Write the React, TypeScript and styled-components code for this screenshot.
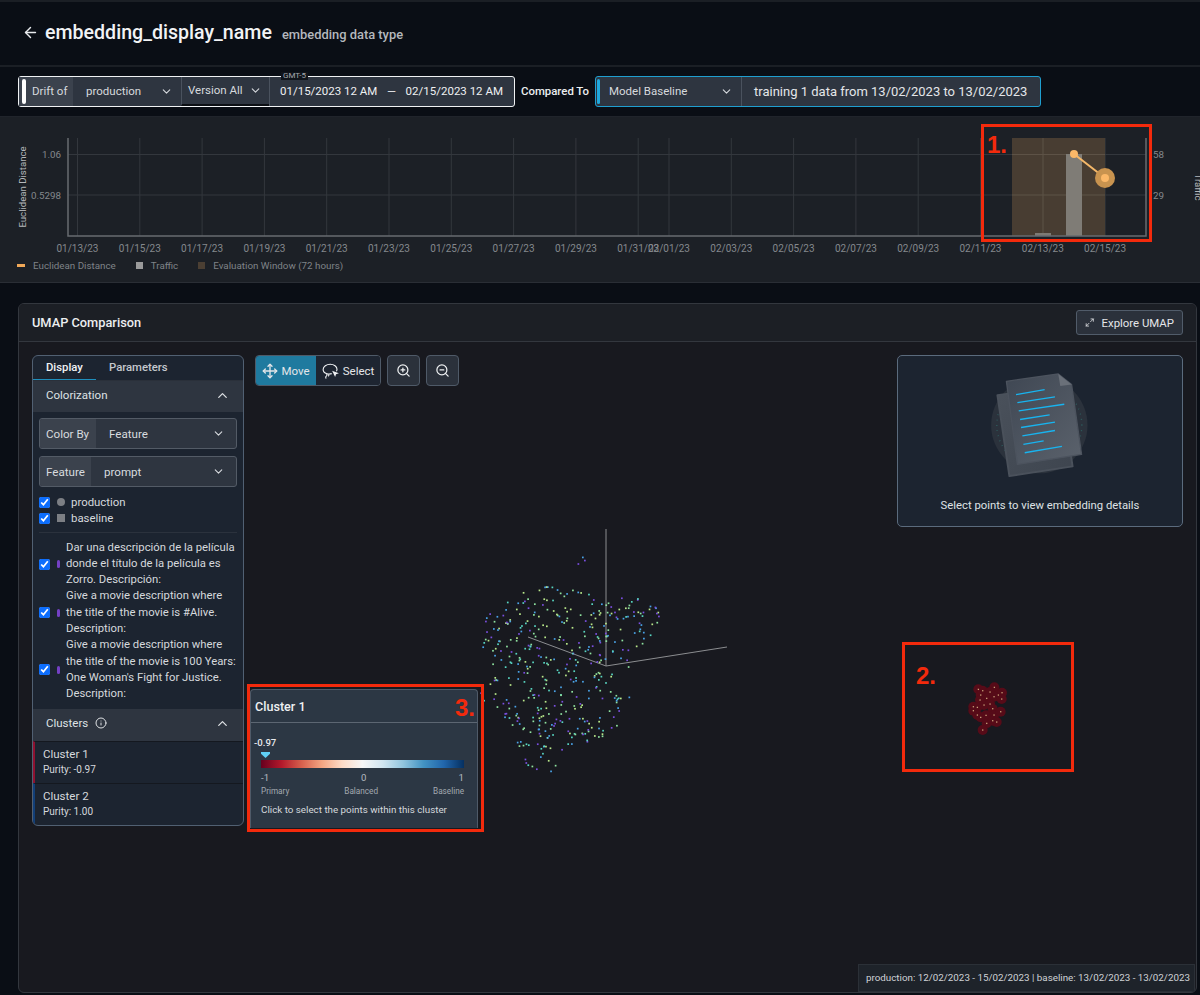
import styled, { createGlobalStyle } from "styled-components";
import {
  ArrowLeft,
  ChevronDown,
  ChevronUp,
  Info,
  Maximize2,
  Move,
  ZoomIn,
  ZoomOut,
} from "lucide-react";

const GlobalStyle = createGlobalStyle`
  html, body {
    margin: 0;
    background: #0a0e15;
    overflow: hidden;
  }
  * {
    box-sizing: border-box;
  }
`;

const Page = styled.div`
  position: relative;
  width: 1200px;
  height: 995px;
  overflow: hidden;
  background: #0a0e15;
  color: #e8eaed;
  font-family: Roboto, "Liberation Sans", sans-serif;
`;

const Header = styled.header`
  height: 67px;
  display: flex;
  align-items: center;
  gap: 10px;
  padding: 0 0 2px 22px;
  border-top: 2px solid #1b1f25;
  border-bottom: 2px solid #1b1f25;
`;

const BackIcon = styled(ArrowLeft)`
  margin-right: -4px;
  color: #e8eaed;
`;

const Title = styled.h1`
  margin: 0;
  font-size: 19.6px;
  font-weight: 500;
  color: #f2f3f5;
`;

const SubTitle = styled.span`
  font-size: 12.9px;
  font-weight: 500;
  color: #b4b8bd;
  margin-top: 3px;
`;

const Toolbar = styled.div`
  height: 50px;
  display: flex;
  align-items: center;
  padding: 0 0 1px 18px;
  border-bottom: 1px solid #20242b;
`;

const FilterGroup = styled.div<{ $accent: string; $width: number }>`
  display: flex;
  align-items: stretch;
  width: ${(p) => p.$width}px;
  height: 31px;
  border: 1px solid ${(p) => p.$accent};
  border-radius: 3px;
  background: #2e3540;
`;

const GroupBar = styled.span<{ $color: string; $width: number }>`
  flex: none;
  align-self: stretch;
  width: ${(p) => p.$width}px;
  margin: 2px 0;
  border-radius: 2px;
  background: ${(p) => p.$color};
`;

const Segment = styled.div<{ $width: number; $divider?: boolean }>`
  position: relative;
  display: flex;
  align-items: center;
  justify-content: space-between;
  flex: none;
  width: ${(p) => p.$width}px;
  padding: 0 8px 0 13px;
  font-size: 11.5px;
  color: #d6d9dd;
  white-space: nowrap;
  border-left: ${(p) => (p.$divider ? "1px solid #4a525e" : "none")};
`;

const DriftLabel = styled(Segment)`
  justify-content: flex-start;
  gap: 6px;
  padding: 0 0 0 3px;
  background: #3b424d;
`;

const VersionSegment = styled(Segment)`
  padding: 0 7px 0 6px;
  border-bottom: 2px solid #0c0f14;
`;

const DateSegment = styled(Segment)`
  padding: 0 11px 0 10px;
`;

const BaselineLead = styled.div`
  display: flex;
  align-items: stretch;
  flex: none;
  padding-left: 1px;
`;

const BaselineSelect = styled(Segment)`
  padding: 0 8px 0 9px;
`;

const BaselineRange = styled(Segment)`
  padding: 0 0 0 12px;
`;

const GmtBadge = styled.span`
  position: absolute;
  left: 11px;
  top: -5px;
  padding: 0 2px;
  font-size: 8px;
  line-height: 8px;
  color: #a5a9ae;
  background: #10141b;
`;

const DateText = styled.span`
  font-size: 11.5px;
  color: #eef0f2;
`;

const BaselineText = styled.span`
  font-size: 13px;
  color: #e4e6e9;
`;

const ComparedLabel = styled.span`
  margin: 0 6px;
  font-size: 11.4px;
  font-weight: 500;
  color: #eceef0;
  white-space: nowrap;
`;

const ChartPanel = styled.section`
  height: 166px;
  background: #1c2026;
  border-bottom: 1px solid #2a2e35;
`;

const ChartSvg = styled.svg`
  display: block;
`;

const Legend = styled.div`
  display: flex;
  align-items: center;
  padding: 3px 0 0 17px;
  font-size: 9.8px;
  color: #7f8388;
`;

const LegendItem = styled.span`
  display: flex;
  align-items: center;
  gap: 8px;
  margin-right: 20px;
`;

const LegendSwatch = styled.i<{ $color: string; $thin?: boolean }>`
  display: block;
  width: ${(p) => (p.$thin ? 8 : 7)}px;
  height: ${(p) => (p.$thin ? 3 : 7)}px;
  background: ${(p) => p.$color};
`;

const Card = styled.section`
  position: relative;
  height: 690px;
  margin: 20px 3px 0 18px;
  border: 1px solid #33373e;
  border-radius: 6px;
  background: #18191f;
  overflow: hidden;
`;

const CardHeader = styled.div`
  height: 38px;
  display: flex;
  align-items: center;
  justify-content: space-between;
  padding: 0 13px;
  background: #1c1f25;
  border-bottom: 1px solid #33373e;
`;

const CardTitle = styled.h2`
  margin: 0;
  font-size: 12.8px;
  font-weight: 500;
  color: #eceef0;
`;

const ExploreButton = styled.button`
  display: flex;
  align-items: center;
  gap: 7px;
  width: 107px;
  height: 25px;
  padding: 0 8px;
  border: 1px solid #515c6a;
  border-radius: 3px;
  background: #2b313b;
  color: #e4e6e9;
  font: 400 11.4px Roboto, sans-serif;
  white-space: nowrap;
`;

const CardBody = styled.div`
  position: relative;
  display: flex;
  align-items: flex-start;
  gap: 11px;
  height: 650px;
  padding: 13px 13px 0;
`;

const ScatterCanvas = styled.svg`
  position: absolute;
  left: 0;
  top: 0;
`;

const SidePanel = styled.aside`
  position: relative;
  width: 212px;
  height: 471px;
  flex: none;
  border: 1px solid #516072;
  border-radius: 6px;
  background: #1c2430;
  overflow: hidden;
`;

const Tabs = styled.div`
  display: flex;
  height: 25px;
  border-bottom: 1px solid #2a303a;
`;

const Tab = styled.div<{ $active?: boolean }>`
  width: ${(p) => (p.$active ? 63 : 86)}px;
  padding: 5px 0 0 13px;
  font-size: 11.3px;
  font-weight: 500;
  color: ${(p) => (p.$active ? "#f0f2f4" : "#c4c8cd")};
  border-bottom: 1px solid ${(p) => (p.$active ? "#1f8fbd" : "transparent")};
`;

const SectionHeader = styled.div<{ $height: number; $top?: number }>`
  display: flex;
  align-items: center;
  justify-content: space-between;
  height: ${(p) => p.$height}px;
  margin-top: ${(p) => p.$top ?? 0}px;
  padding: 0 13px 3px;
  font-size: 11.5px;
  color: #dfe2e5;
  background: #2e3540;
`;

const SectionLabel = styled.span`
  display: flex;
  align-items: center;
  gap: 7px;
`;

const SectionBody = styled.div`
  display: flex;
  flex-direction: column;
  padding: 6px 6px 0;
`;

const SelectRow = styled.div`
  display: flex;
  flex: none;
  height: 31px;
  margin-bottom: 7px;
  border: 1px solid #535b66;
  border-radius: 3px;
  background: #2e3540;
  font-size: 11.6px;
  color: #d8dbdf;
  overflow: hidden;
`;

const SelectLabel = styled.span<{ $width: number }>`
  display: flex;
  align-items: center;
  width: ${(p) => p.$width}px;
  padding-left: 6px;
  background: #3b424d;
`;

const SelectValue = styled.span`
  display: flex;
  flex: 1;
  align-items: center;
  justify-content: space-between;
  padding: 0 11px 0 13px;
`;

const CheckRow = styled.label`
  display: flex;
  align-items: center;
  height: 16.3px;
  font-size: 11.4px;
  color: #d6d9dd;
`;

const CheckBox = styled.input`
  width: 11px;
  height: 11px;
  margin: 0 7px 0 0;
  flex: none;
  accent-color: #0d6efd;
`;

const Marker = styled.i<{ $square?: boolean }>`
  display: block;
  flex: none;
  width: 8px;
  height: 8px;
  margin-right: 6px;
  background: #7c7f84;
  border-radius: ${(p) => (p.$square ? "0" : "50%")};
`;

const PurpleMark = styled.i`
  display: block;
  flex: none;
  width: 3px;
  height: 8px;
  margin-right: 6px;
  background: #7440c4;
  border-radius: 2px;
`;

const Divider = styled.hr`
  width: 100%;
  margin: 5px 0 7px;
  border: 0;
  border-top: 1px solid #2b323d;
`;

const FeatureRow = styled.label`
  display: flex;
  align-items: center;
  font-size: 11.3px;
  line-height: 16.3px;
  color: #d6d9dd;
  white-space: nowrap;
`;

const FeatureText = styled.span`
  display: block;
`;

const ClusterRow = styled.div<{ $color: string }>`
  height: 42px;
  padding: 4px 0 0 8px;
  border-top: 1px solid #14181f;
  border-left: 2px solid ${(p) => p.$color};
  color: #d6d9dd;
`;

const ClusterName = styled.div`
  font-size: 11.5px;
  line-height: 16px;
`;

const ClusterPurity = styled.div`
  font-size: 10px;
  line-height: 14px;
  margin-top: 1px;
`;

const ToolGroup = styled.div`
  position: relative;
  display: flex;
  height: 31px;
  width: 126px;
  border: 1px solid #4f5a68;
  border-radius: 4px;
  overflow: hidden;
  flex: none;
`;

const ToolMode = styled.div<{ $active?: boolean; $width: number }>`
  display: flex;
  align-items: center;
  justify-content: center;
  gap: 3px;
  width: ${(p) => p.$width}px;
  font-size: 11.5px;
  color: #e4e6e9;
  background: ${(p) => (p.$active ? "#1f7a9f" : "#1e2531")};
`;

const IconButton = styled.button`
  position: relative;
  display: flex;
  align-items: center;
  justify-content: center;
  flex: none;
  width: 33px;
  height: 31px;
  margin-left: -5px;
  padding: 0;
  border: 1px solid #4f5a68;
  border-radius: 4px;
  background: #2b313b;
  color: #eef0f2;
`;

const DetailsCard = styled.div`
  position: relative;
  display: flex;
  flex-direction: column;
  align-items: center;
  flex: none;
  width: 286px;
  height: 172px;
  margin-left: auto;
  padding-top: 12px;
  border: 1px solid #5b6b7d;
  border-radius: 5px;
  background: #1c2430;
`;

const DetailsText = styled.p`
  margin: 18px 0 0;
  font-size: 11.3px;
  color: #dfe2e5;
`;

const ClusterTooltip = styled.div`
  position: absolute;
  left: 231px;
  top: 347px;
  width: 228px;
  height: 139px;
  border: 1px solid #4f5a68;
  border-bottom: 0;
  border-radius: 4px 4px 0 0;
  background: #2c3744;
`;

const TooltipTitle = styled.div`
  height: 33px;
  padding: 9px 0 0 4px;
  font-size: 12.6px;
  font-weight: 500;
  color: #eef0f2;
  border-bottom: 1px solid #5c6672;
`;

const TooltipBody = styled.div`
  position: relative;
  padding: 14px 13px 0 10px;
`;

const ScoreValue = styled.div`
  margin-left: -7px;
  font-size: 9.6px;
  font-weight: 500;
  line-height: 12px;
  color: #e8eaed;
`;

const ScoreMarker = styled.i`
  display: block;
  width: 9px;
  height: 6px;
  margin: 3px 0 2px 0;
  background: #5fd0f5;
  clip-path: polygon(0 0, 100% 0, 100% 30%, 50% 100%, 0 30%);
`;

const GradientBar = styled.div`
  height: 8px;
  background: linear-gradient(
    90deg,
    #67001f,
    #b2182b,
    #d6604d,
    #f4a582,
    #fddbc7,
    #f7f7f7,
    #d1e5f0,
    #92c5de,
    #4393c3,
    #2166ac,
    #053061
  );
`;

const ScaleRow = styled.div<{ $muted?: boolean }>`
  display: flex;
  justify-content: space-between;
  margin-top: ${(p) => (p.$muted ? 1 : 4)}px;
  font-size: ${(p) => (p.$muted ? 8.2 : 9.6)}px;
  line-height: 12px;
  color: ${(p) => (p.$muted ? "#a3a9b0" : "#b5bac0")};
`;

const TooltipHint = styled.div`
  margin-top: 7px;
  font-size: 9.8px;
  color: #d6d9dd;
  white-space: nowrap;
`;

const RangeCaption = styled.div`
  position: absolute;
  right: 1px;
  bottom: 0;
  width: 337px;
  height: 28px;
  padding: 7px 0 0 7px;
  font-size: 9.8px;
  color: #cfd2d6;
  background: #1e232a;
  border: 1px solid #2b3037;
  white-space: nowrap;
`;

const Annotation = styled.div<{ $x: number; $y: number; $w: number; $h: number }>`
  position: absolute;
  left: ${(p) => p.$x}px;
  top: ${(p) => p.$y}px;
  width: ${(p) => p.$w}px;
  height: ${(p) => p.$h}px;
  border: 3px solid #f32a0c;
`;

const AnnotationLabel = styled.span<{ $x: number; $y: number }>`
  position: absolute;
  left: ${(p) => p.$x}px;
  top: ${(p) => p.$y}px;
  font: 700 24px/24px "Liberation Sans", sans-serif;
  color: #f32a0c;
`;

const chartTicks: [string, number][] = [
  ...[
    "01/13/23",
    "01/15/23",
    "01/17/23",
    "01/19/23",
    "01/21/23",
    "01/23/23",
    "01/25/23",
    "01/27/23",
    "01/29/23",
    "01/31/23",
  ].map((label, i): [string, number] => [label, 77.5 + 62.3 * i]),
  ...[
    "02/01/23",
    "02/03/23",
    "02/05/23",
    "02/07/23",
    "02/09/23",
    "02/11/23",
    "02/13/23",
    "02/15/23",
  ].map((label, i): [string, number] => [label, 669 + 62.3 * i]),
];

const DriftChart = () => (
  <ChartSvg width={1200} height={140} viewBox="0 117 1200 140">
    {chartTicks.map(([label, x]) => (
      <g key={label}>
        <line x1={x} x2={x} y1={138} y2={236} stroke="#33373d" />
        <text x={x} y={252} textAnchor="middle" fontSize={10} fill="#84888d">
          {label}
        </text>
      </g>
    ))}
    <line x1={68} x2={1146} y1={154.5} y2={154.5} stroke="#33373d" />
    <line x1={68} x2={1146} y1={195} y2={195} stroke="#33373d" />
    <rect x={1012} y={138} width={93} height={98} fill="#4b3f33" fillOpacity={0.95} />
    <line x1={1043} x2={1043} y1={138} y2={236} stroke="#5d5246" />
    <line x1={1012} x2={1105} y1={154.5} y2={154.5} stroke="#5d5246" />
    <line x1={1012} x2={1105} y1={195} y2={195} stroke="#5d5246" />
    <rect x={1035} y={233} width={16} height={3} fill="#7d7a74" />
    <rect x={1066} y={154} width={16} height={82} fill="#7f7c76" />
    <path d="M68 138V236H1146V138" fill="none" stroke="#676b70" strokeWidth={1.5} />
    <line x1={1074} y1={154} x2={1105} y2={178} stroke="#f5b869" strokeWidth={2} />
    <circle cx={1105} cy={178} r={10} fill="#c8934f" />
    <circle cx={1105} cy={178} r={4} fill="#fbb868" />
    <circle cx={1074} cy={154} r={4} fill="#fbb868" />
    <g fontSize={9.8} fill="#84888d">
      <text x={61} y={158} textAnchor="end">1.06</text>
      <text x={61} y={199} textAnchor="end">0.5298</text>
      <text x={1153} y={158}>58</text>
      <text x={1153} y={199}>29</text>
    </g>
    <text
      transform="translate(26 187) rotate(-90)"
      textAnchor="middle"
      fontSize={9.6}
      fill="#b5b8bc"
    >
      Euclidean Distance
    </text>
    <text transform="translate(1195 187) rotate(90)" textAnchor="middle" fontSize={9.6} fill="#b5b8bc">
      Traffic
    </text>
  </ChartSvg>
);

// seeded so the cloud stays the same between renders
const makeRandom = (seed: number) => () => {
  seed = (seed + 0x6d2b79f5) | 0;
  let t = Math.imul(seed ^ (seed >>> 15), 1 | seed);
  t = (t + Math.imul(t ^ (t >>> 7), 61 | t)) ^ t;
  return ((t ^ (t >>> 14)) >>> 0) / 4294967296;
};

const blobs = [
  [555, 635, 76, 50],
  [550, 685, 72, 42],
  [560, 722, 58, 22],
  [540, 748, 24, 27],
  [628, 622, 33, 26],
  [608, 682, 22, 44],
  [586, 560, 13, 7],
];
const dotColors = ["#b9e88a", "#58d6c2", "#4aa3e8", "#7a4fe0", "#8fe3a0"];

const cloudPoints = (() => {
  const random = makeRandom(41);
  const points: { x: number; y: number; color: string }[] = [];
  while (points.length < 430) {
    const x = 475 + random() * 190;
    const y = 552 + random() * 224;
    const inside = blobs.some(
      ([cx, cy, rx, ry]) => ((x - cx) / rx) ** 2 + ((y - cy) / ry) ** 2 < 1
    );
    if (inside) {
      points.push({ x, y, color: dotColors[Math.floor(random() * dotColors.length)] });
    }
  }
  return points;
})();

const redCluster = [
  [265, 178], [278, 182], [313, 172], [300, 186], [336, 188], [325, 195], [272, 195],
  [290, 205], [312, 200], [335, 207], [270, 210], [250, 230], [262, 232], [282, 225],
  [300, 222], [308, 236], [250, 242], [262, 255], [288, 256], [312, 255], [332, 245],
  [272, 262], [290, 280], [308, 272], [320, 276], [278, 300],
].map(([x, y]) => [890 + x / 3, 630 + y / 3]);

const Scatter = () => (
  <ScatterCanvas width={1177} height={650} viewBox="19 342 1177 650">
    <g stroke="#8b8d90" strokeWidth={1}>
      <line x1={606} y1={529} x2={606} y2={666} />
      <line x1={606} y1={666} x2={727} y2={647} />
      <line x1={606} y1={666} x2={528} y2={637} />
    </g>
    {cloudPoints.map((p, i) => (
      <rect key={i} x={p.x} y={p.y} width={1.7} height={1.7} fill={p.color} />
    ))}
    {redCluster.map(([x, y], i) => (
      <circle key={i} cx={x} cy={y} r={5} fill="#560b18" />
    ))}
    {redCluster.map(([x, y], i) => (
      <rect key={i} x={x - 0.6} y={y - 0.6} width={1.3} height={1.3} fill="#c9a27a" />
    ))}
  </ScatterCanvas>
);

const LassoIcon = () => (
  <svg width={18} height={18} viewBox="0 0 24 24" fill="none" stroke="#eef0f2" strokeWidth={1.5}>
    <path d="M13 15.500c-2 .6-4.500.7-6.500.1C3.500 14.700 1.500 12.700 1.500 10c0-4 4.500-7 9.500-7s9 3 9 6.500c0 1-.3 2-.9 2.800" />
    <path d="M6 15.500c1.200 1.500.6 3-.5 3.700-.8.5-.8 1.800.2 2.800M9 16c.3 1 .1 2.500-.6 3.300" />
    <path d="M13.500 11.500l9 3.500-3.800 1.200-1.200 3.800z" fill="#eef0f2" stroke="none" />
  </svg>
);

const docLines = [
  [408, 280, 494, 265],
  [412, 304, 525, 287],
  [416, 329, 553, 309],
  [420, 355, 509, 341],
  [423, 379, 525, 363],
  [427, 404, 525, 388],
  [430, 430, 491, 419],
  [434, 455, 546, 436],
];

const DocumentArt = () => (
  <svg width={120} height={113} viewBox="300 200 360 340">
    <defs>
      <linearGradient id="paper" x1="0" y1="0" x2="1" y2="1">
        <stop offset="0" stopColor="#3f4753" />
        <stop offset="1" stopColor="#5b626c" />
      </linearGradient>
      <linearGradient id="paperBack" x1="0" y1="0" x2="1" y2="1">
        <stop offset="0" stopColor="#4a515b" />
        <stop offset="1" stopColor="#3e454f" />
      </linearGradient>
    </defs>
    <circle cx={478} cy={372} r={145} fill="#2b323c" />
    <circle cx={478} cy={372} r={128} fill="none" stroke="#2f6a6a" strokeWidth={4} strokeDasharray="2 14" />
    <path d="M352 282l190-26 36 240-190 29z" fill="url(#paperBack)" stroke="#4a515b" strokeWidth={6} strokeLinejoin="round" />
    <path d="M379 240l156-22 40 32 30 210-193 30z" fill="url(#paper)" stroke="#4c535e" strokeWidth={4} strokeLinejoin="round" />
    <path d="M535 218l40 32-34 4z" fill="#6a7079" />
    {docLines.map(([x1, y1, x2, y2]) => (
      <line key={y1} x1={x1} y1={y1} x2={x2} y2={y2} stroke="#18b4f0" strokeWidth={4} />
    ))}
  </svg>
);

const featureValues = [
  { lines: ["Dar una descripción de la película", "donde el título de la película es", "Zorro. Descripción:"] },
  { lines: ["Give a movie description where", "the title of the movie is #Alive.", "Description:"] },
  {
    lines: [
      "Give a movie description where",
      "the title of the movie is 100 Years:",
      "One Woman's Fight for Justice.",
      "Description:",
    ],
  },
];

const App = () => (
  <Page>
    <GlobalStyle />
    <Header>
      <BackIcon size={17} strokeWidth={2} />
      <Title>embedding_display_name</Title>
      <SubTitle>embedding data type</SubTitle>
    </Header>

    <Toolbar>
      <FilterGroup $accent="#f0f2f4" $width={497}>
        <DriftLabel $width={54}>
          <GroupBar $color="#ffffff" $width={4} />
          Drift of
        </DriftLabel>
        <Segment $width={108}>
          production
          <ChevronDown size={13} />
        </Segment>
        <VersionSegment $width={88} $divider>
          Version All
          <ChevronDown size={13} />
        </VersionSegment>
        <DateSegment $width={245} $divider>
          <GmtBadge>GMT-5</GmtBadge>
          <DateText>01/15/2023 12 AM</DateText>
          <DateText>—</DateText>
          <DateText>02/15/2023 12 AM</DateText>
        </DateSegment>
      </FilterGroup>
      <ComparedLabel>Compared To</ComparedLabel>
      <FilterGroup $accent="#1f9fd0" $width={446}>
        <BaselineLead>
          <GroupBar $color="#1fa8dc" $width={3} />
        </BaselineLead>
        <BaselineSelect $width={141}>
          Model Baseline
          <ChevronDown size={13} />
        </BaselineSelect>
        <BaselineRange $width={298} $divider>
          <BaselineText>training 1 data from 13/02/2023 to 13/02/2023</BaselineText>
        </BaselineRange>
      </FilterGroup>
    </Toolbar>

    <ChartPanel>
      <DriftChart />
      <Legend>
        <LegendItem>
          <LegendSwatch $color="#f0a858" $thin />
          Euclidean Distance
        </LegendItem>
        <LegendItem>
          <LegendSwatch $color="#9a9a9a" />
          Traffic
        </LegendItem>
        <LegendItem>
          <LegendSwatch $color="#4b3f33" />
          Evaluation Window (72 hours)
        </LegendItem>
      </Legend>
    </ChartPanel>

    <Card>
      <CardHeader>
        <CardTitle>UMAP Comparison</CardTitle>
        <ExploreButton>
          <Maximize2 size={13} />
          Explore UMAP
        </ExploreButton>
      </CardHeader>
      <CardBody>
        <Scatter />
        <SidePanel>
          <Tabs>
            <Tab $active>Display</Tab>
            <Tab>Parameters</Tab>
          </Tabs>
          <SectionHeader $height={31}>
            Colorization
            <ChevronUp size={15} />
          </SectionHeader>
          <SectionBody>
            <SelectRow>
              <SelectLabel $width={56}>Color By</SelectLabel>
              <SelectValue>
                Feature
                <ChevronDown size={13} />
              </SelectValue>
            </SelectRow>
            <SelectRow>
              <SelectLabel $width={51}>Feature</SelectLabel>
              <SelectValue>
                prompt
                <ChevronDown size={13} />
              </SelectValue>
            </SelectRow>
            <CheckRow>
              <CheckBox type="checkbox" defaultChecked />
              <Marker />
              production
            </CheckRow>
            <CheckRow>
              <CheckBox type="checkbox" defaultChecked />
              <Marker $square />
              baseline
            </CheckRow>
            <Divider />
            {featureValues.map((feature) => (
              <FeatureRow key={feature.lines[1]}>
                <CheckBox type="checkbox" defaultChecked />
                <PurpleMark />
                <FeatureText>
                  {feature.lines.map((line) => (
                    <div key={line}>{line}</div>
                  ))}
                </FeatureText>
              </FeatureRow>
            ))}
          </SectionBody>
          <SectionHeader $height={32} $top={6}>
            <SectionLabel>
              Clusters
              <Info size={12} />
            </SectionLabel>
            <ChevronUp size={15} />
          </SectionHeader>
          <ClusterRow $color="#8f1231">
            <ClusterName>Cluster 1</ClusterName>
            <ClusterPurity>Purity: -0.97</ClusterPurity>
          </ClusterRow>
          <ClusterRow $color="#123f78">
            <ClusterName>Cluster 2</ClusterName>
            <ClusterPurity>Purity: 1.00</ClusterPurity>
          </ClusterRow>
        </SidePanel>

        <ToolGroup>
          <ToolMode $active $width={61}>
            <Move size={16} />
            Move
          </ToolMode>
          <ToolMode $width={65}>
            <LassoIcon />
            Select
          </ToolMode>
        </ToolGroup>
        <IconButton>
          <ZoomIn size={15} />
        </IconButton>
        <IconButton>
          <ZoomOut size={15} />
        </IconButton>

        <DetailsCard>
          <DocumentArt />
          <DetailsText>Select points to view embedding details</DetailsText>
        </DetailsCard>

        <ClusterTooltip>
          <TooltipTitle>Cluster 1</TooltipTitle>
          <TooltipBody>
            <ScoreValue>-0.97</ScoreValue>
            <ScoreMarker />
            <GradientBar />
            <ScaleRow>
              <span>-1</span>
              <span>0</span>
              <span>1</span>
            </ScaleRow>
            <ScaleRow $muted>
              <span>Primary</span>
              <span>Balanced</span>
              <span>Baseline</span>
            </ScaleRow>
            <TooltipHint>Click to select the points within this cluster</TooltipHint>
          </TooltipBody>
        </ClusterTooltip>
      </CardBody>
      <RangeCaption>production: 12/02/2023 - 15/02/2023 | baseline: 13/02/2023 - 13/02/2023</RangeCaption>
    </Card>

    <Annotation $x={981} $y={124} $w={171} $h={118}>
      <AnnotationLabel $x={3} $y={6}>1.</AnnotationLabel>
    </Annotation>
    <Annotation $x={902} $y={642} $w={172} $h={130}>
      <AnnotationLabel $x={11} $y={19}>2.</AnnotationLabel>
    </Annotation>
    <Annotation $x={247} $y={684} $w={237} $h={148}>
      <AnnotationLabel $x={205} $y={9}>3.</AnnotationLabel>
    </Annotation>
  </Page>
);

export default App;
